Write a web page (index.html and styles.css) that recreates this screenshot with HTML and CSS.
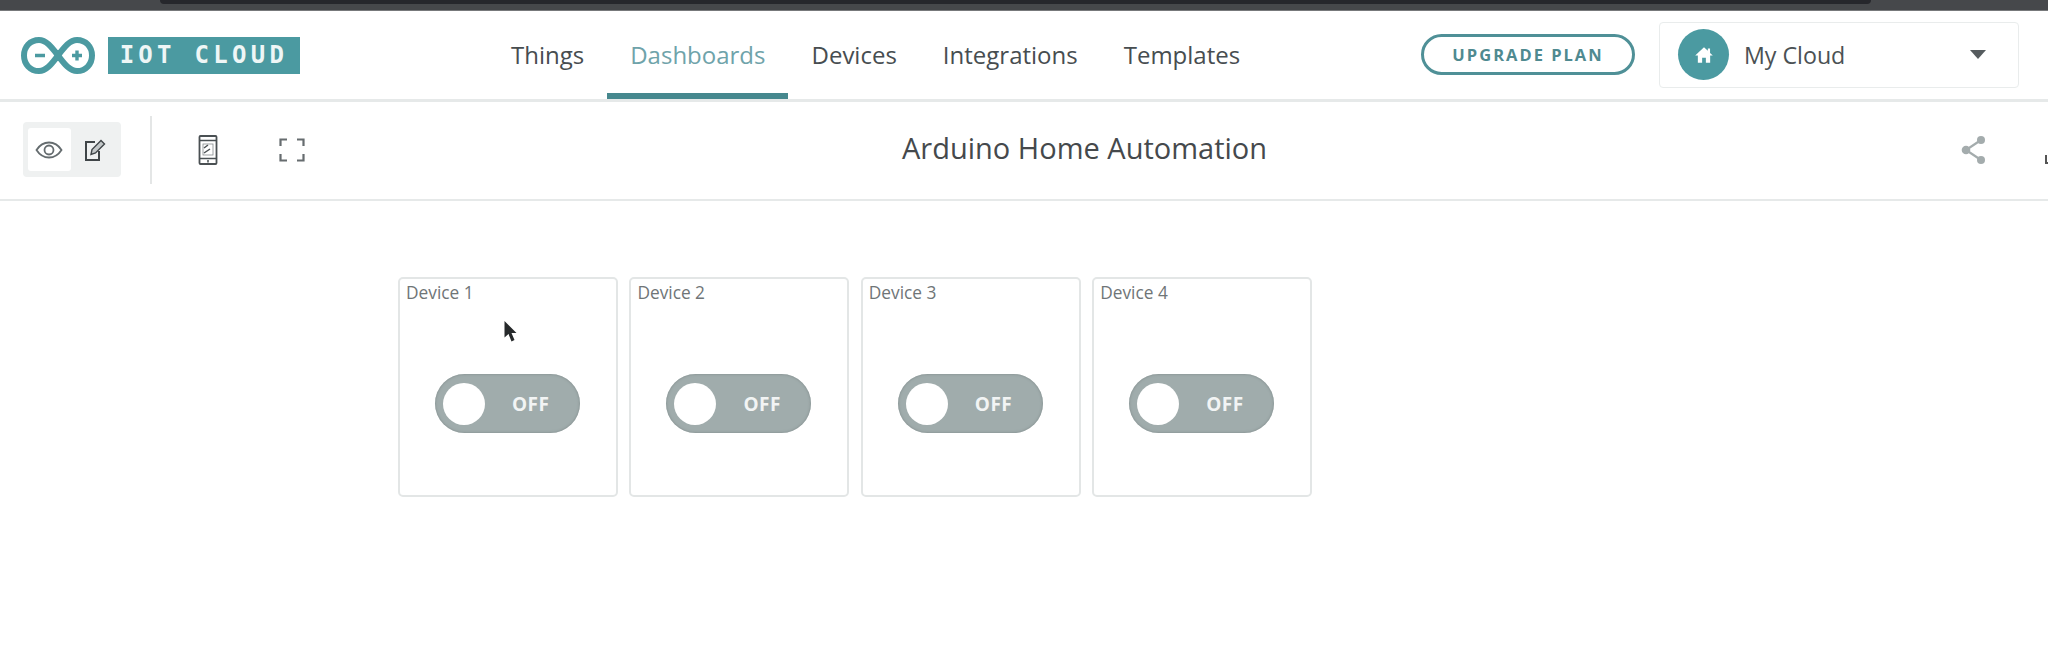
FILE: index.html
```html
<!DOCTYPE html>
<html lang="en">
<head>
<meta charset="utf-8">
<title>Arduino Home Automation</title>
<link rel="stylesheet" href="styles.css">
</head>
<body>
<div class="topstrip"><div class="topstrip-inner"></div></div>
<header class="header">
  <div class="brand">
    <svg class="logo" width="74" height="37" viewBox="0 0 74 37">
      <path d="M18 3C26 3 32 12 37 18.500C42 25 48 34 56 34C65 34 71 27 71 18.500C71 10 65 3 56 3C48 3 42 12 37 18.500C32 25 26 34 18 34C9 34 3 27 3 18.500C3 10 9 3 18 3Z" fill="none" stroke="#4b9aa1" stroke-width="6"/>
      <path d="M14 18.500H24M51 18.500H61M56 13.500V23.500" stroke="#4b9aa1" stroke-width="3.400" fill="none"/>
    </svg>
    <div class="brand-tag">IOT CLOUD</div>
  </div>
  <nav class="nav">
    <a class="nav-item">Things</a>
    <a class="nav-item nav-active">Dashboards</a>
    <a class="nav-item">Devices</a>
    <a class="nav-item">Integrations</a>
    <a class="nav-item">Templates</a>
  </nav>
  <div class="header-right">
    <button class="upgrade">UPGRADE PLAN</button>
    <div class="space">
      <span class="space-icon">
        <svg width="22" height="22" viewBox="0 0 20 20"><path d="M10 3L2 10.500H4.400V17H8.300V12.600H11.700V17H15.600V10.500H18L15.500 8.100V4H13.500V6.200Z" fill="#fff"/></svg>
      </span>
      <span class="space-name">My Cloud</span>
      <span class="caret"></span>
    </div>
  </div>
</header>
<section class="toolbar">
  <div class="mode">
    <span class="mode-btn mode-on">
      <svg width="28" height="20" viewBox="0 0 28 20"><path d="M1.500 10C5 4.500 9 2.500 14 2.500S23 4.500 26.500 10C23 15.500 19 17.500 14 17.500S5 15.500 1.500 10Z" fill="none" stroke="#656c6f" stroke-width="1.800"/><circle cx="14" cy="10" r="4.500" fill="none" stroke="#656c6f" stroke-width="1.800"/></svg>
    </span>
    <span class="mode-btn">
      <svg width="22" height="24" viewBox="0 0 22 24"><path d="M11 4H2V22H15V13" fill="none" stroke="#3f4548" stroke-width="2"/><path d="M7 16.500L8 11.500L17 2.500L20.500 6L11.500 15Z" fill="#c3c8c9" stroke="#3f4548" stroke-width="1.400"/></svg>
    </span>
  </div>
  <div class="divider"></div>
  <svg class="tool-phone" width="20" height="30" viewBox="0 0 20 30"><rect x="1.500" y="1" width="17" height="28" rx="1" fill="none" stroke="#4a5053" stroke-width="1.800"/><path d="M1.500 5.500H18.500M1.500 23.500H18.500M10 25V27.500M6 13L10 10M6 18L12 14" stroke="#4a5053" stroke-width="1.500" fill="none"/><rect x="5" y="9" width="10" height="11" fill="none" stroke="#858b8d" stroke-width="0.800"/></svg>
  <svg class="tool-full" width="26" height="24" viewBox="0 0 26 24"><path d="M1.500 8V1.500H8M18 1.500H24.500V8M1.500 16V22.500H8M18 22.500H24.500V16" fill="none" stroke="#666c6f" stroke-width="2.200"/></svg>
  <h1 class="title">Arduino Home Automation</h1>
  <svg class="tool-share" width="26" height="30" viewBox="0 0 26 30"><path d="M20 5L5 15L20 25" fill="none" stroke="#a4acad" stroke-width="2.200"/><circle cx="20" cy="5" r="4" fill="#a4acad"/><circle cx="5" cy="15" r="4.300" fill="#a4acad"/><circle cx="20" cy="25" r="4" fill="#a4acad"/></svg>
  <span class="edge-mark"></span>
</section>
<main class="board">
  <article class="card">
    <div class="card-label">Device 1</div>
    <div class="switch"><span class="knob"></span><span class="switch-text">OFF</span></div>
  </article>
  <article class="card">
    <div class="card-label">Device 2</div>
    <div class="switch"><span class="knob"></span><span class="switch-text">OFF</span></div>
  </article>
  <article class="card">
    <div class="card-label">Device 3</div>
    <div class="switch"><span class="knob"></span><span class="switch-text">OFF</span></div>
  </article>
  <article class="card">
    <div class="card-label">Device 4</div>
    <div class="switch"><span class="knob"></span><span class="switch-text">OFF</span></div>
  </article>
</main>
<svg class="cursor" width="15" height="24" viewBox="0 0 15 24"><path d="M1.500 1V17.500L5.500 14L8.500 21.500L11.500 20L8.500 13H13.500Z" fill="#26292b"/></svg>
</body>
</html>
```
FILE: styles.css
```css
* { box-sizing: border-box; }
html, body { margin: 0; padding: 0; }
body {
  width: 2048px;
  height: 652px;
  overflow: hidden;
  background: #fff;
  font-family: "Open Sans", "Noto Sans", sans-serif;
  color: #3d4447;
}
.topstrip {
  height: 11px;
  background: #46484b;
  border-bottom: 1px solid #77797b;
  padding: 0 177px 0 160px;
}
.topstrip-inner {
  height: 4px;
  background: #26272c;
  border-radius: 0 0 8px 8px;
}
.header {
  height: 91px;
  display: flex;
  align-items: center;
  border-bottom: 3px solid #e6e9e9;
  padding-left: 21px;
}
.brand { display: flex; align-items: center; gap: 13px; width: 467px; flex: none; }
.logo { display: block; }
.brand-tag {
  width: 192px;
  height: 37px;
  background: #4b9aa1;
  color: #eef6f6;
  font-family: "DejaVu Sans Mono", "Liberation Mono", monospace;
  font-weight: 700;
  font-size: 24px;
  letter-spacing: 4.300px;
  line-height: 37px;
  text-align: center;
  white-space: pre;
}
.nav { display: flex; height: 88px; }
.nav-item {
  display: flex;
  align-items: center;
  justify-content: center;
  height: 88px;
  padding: 0 23px 2px;
  font-size: 24px;
  color: #474d50;
}
.nav-active {
  color: #6fa3aa;
  box-shadow: inset 0 -6px 0 #46888e;
}
.header-right { display: flex; align-items: center; margin-left: auto; margin-right: 29px; gap: 24px; margin-top: -1px; }
.upgrade {
  width: 214px;
  height: 41px;
  border: 3px solid #4f9097;
  border-radius: 21px;
  background: #fff;
  color: #4f8a90;
  font-family: "Open Sans", sans-serif;
  font-weight: 700;
  font-size: 16.500px;
  letter-spacing: 2px;
  padding: 0;
}
.space {
  width: 360px;
  height: 66px;
  border: 1px solid #e9ecec;
  border-radius: 4px;
  display: flex;
  align-items: center;
  padding: 0 32px 0 18px;
}
.space-icon {
  width: 51px;
  height: 51px;
  border-radius: 50%;
  background: #4b9aa1;
  display: flex;
  align-items: center;
  justify-content: center;
  flex: none;
}
.space-name { font-size: 23.200px; margin-left: 15px; color: #4b5154; flex: 1; }
.caret {
  width: 0;
  height: 0;
  border-left: 8px solid transparent;
  border-right: 8px solid transparent;
  border-top: 9px solid #565c5f;
}
.toolbar {
  height: 99px;
  display: flex;
  align-items: center;
  position: relative;
  border-bottom: 2px solid #e6e9e9;
  padding: 0 0 2px 23px;
}
.mode {
  display: flex;
  width: 98px;
  height: 55px;
  background: #eff1f1;
  border-radius: 4px;
  padding: 6px 5px;
}
.mode-btn { width: 44px; height: 43px; display: flex; align-items: center; justify-content: center; }
.mode-on { background: #fff; border-radius: 3px; }
.mode-btn + .mode-btn { margin-left: 3px; }
.divider { width: 2px; height: 68px; background: #e4e6e6; margin-left: 29px; }
.tool-phone { margin-left: 46px; flex: none; }
.tool-full { margin-left: 61px; flex: none; }
.title {
  margin: 0;
  position: absolute;
  left: 902px;
  top: 26px;
  font-weight: 400;
  font-size: 29px;
  line-height: 40px;
  color: #45494c;
  white-space: nowrap;
}
.tool-share { position: absolute; left: 1961px; top: 33px; }
.edge-mark {
  position: absolute;
  left: 2045px;
  top: 53px;
  width: 3px;
  height: 9px;
  border-left: 2px solid #555;
  border-bottom: 2px solid #555;
}
.board { display: flex; gap: 11.400px; padding: 76px 0 0 398px; }
.card {
  width: 220px;
  height: 220px;
  border: 2px solid #e3e6e6;
  border-radius: 5px;
  padding: 3px 6px;
}
.card-label { font-size: 17.300px; line-height: 22px; color: #6f7577; }
.switch {
  width: 145px;
  height: 59px;
  margin: 70px 0 0 29px;
  border-radius: 30px;
  background: #a0acac;
  box-shadow: inset 0 0 3px #7d8888;
  display: flex;
  align-items: center;
  padding-left: 8px;
}
.knob { width: 42px; height: 42px; border-radius: 50%; background: #fff; flex: none; }
.switch-text {
  margin-left: 27px;
  color: #f2f4f4;
  font-weight: 700;
  font-size: 19px;
  letter-spacing: 0.500px;
}
.cursor { position: absolute; left: 503px; top: 320px; }
```
